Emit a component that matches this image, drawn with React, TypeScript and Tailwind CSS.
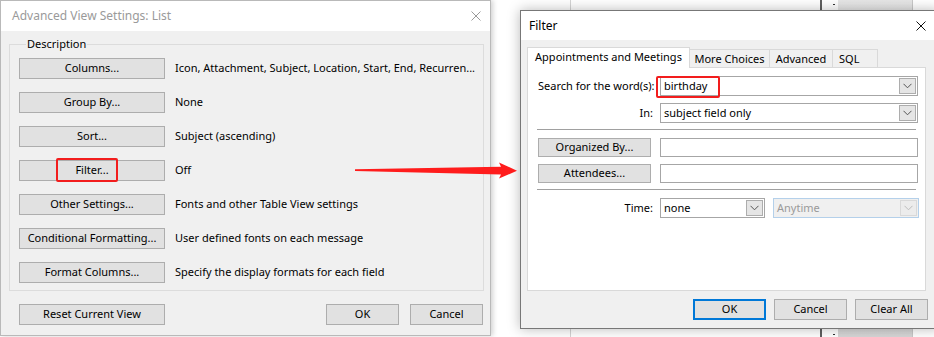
import React from "react";

const FONT = { fontFamily: '"Noto Sans", "Open Sans", sans-serif' };

function Chevron({ color = "#444" }: { color?: string }) {
  return (
    <svg width="9" height="6" viewBox="0 0 9 6">
      <polyline points="0.5,0.8 4.5,4.8 8.5,0.8" fill="none" stroke={color} strokeWidth="1" />
    </svg>
  );
}

function XIcon({ color, size = 10 }: { color: string; size?: number }) {
  return (
    <svg width={size} height={size} viewBox="0 0 10 10">
      <line x1="0.5" y1="0.5" x2="9.5" y2="9.5" stroke={color} strokeWidth="1" />
      <line x1="9.5" y1="0.5" x2="0.5" y2="9.5" stroke={color} strokeWidth="1" />
    </svg>
  );
}

function Btn({ children, className = "" }: { children: React.ReactNode; className?: string }) {
  return (
    <div
      className={
        "border border-[#adadad] bg-[#e1e1e1] text-[11px] text-black flex items-center justify-center shrink-0 whitespace-nowrap " +
        className
      }
    >
      {children}
    </div>
  );
}

function Combo({
  value,
  className = "",
  disabled = false,
}: {
  value: string;
  className?: string;
  disabled?: boolean;
}) {
  return (
    <div
      className={
        "h-[20px] border flex items-stretch shrink-0 " +
        (disabled ? "border-[#b4d0ea] bg-[#f0f0f0] " : "border-[#a6a6a6] bg-white ") +
        className
      }
    >
      <div
        className={
          "flex-1 flex items-center pl-[3px] text-[11px] whitespace-nowrap " +
          (disabled ? "text-[#9a9a9a]" : "text-black")
        }
      >
        {value}
      </div>
      <div
        className={
          "w-[17px] my-[1px] mr-[1px] border flex items-center justify-center " +
          (disabled ? "border-[#d9d9d9] bg-[#ececec]" : "border-[#adadad] bg-[#e5e5e5]")
        }
      >
        <Chevron color={disabled ? "#bdbdbd" : "#555"} />
      </div>
    </div>
  );
}

const rows: [string, string][] = [
  ["Columns...", "Icon, Attachment, Subject, Location, Start, End, Recurren..."],
  ["Group By...", "None"],
  ["Sort...", "Subject (ascending)"],
  ["Filter...", "Off"],
  ["Other Settings...", "Fonts and other Table View settings"],
  ["Conditional Formatting...", "User defined fonts on each message"],
  ["Format Columns...", "Specify the display formats for each field"],
];

export default function App() {
  return (
    <div className="relative w-[934px] h-[337px] overflow-hidden bg-white" style={FONT}>
      {/* background application behind the dialogs */}
      <div className="absolute left-[570px] top-0 w-px h-full bg-[#d4d4d4]" />
      <div className="absolute left-[820px] top-0 w-[2px] h-full bg-[#5f5f5f]" />
      <div className="absolute left-[838px] top-0 w-[74px] h-full bg-gradient-to-b from-[#e6e6e6] to-[#d6d6d6]" />
      <div className="absolute left-[912px] top-0 w-px h-full bg-[#c8c8c8]" />
      <div className="absolute left-[833px] top-[4px] w-[2px] h-px bg-[#333]" />
      <div className="absolute left-[833px] top-[334px] w-[2px] h-px bg-[#333]" />

      <div className="relative flex items-start">
        {/* Left dialog */}
        <div className="w-[491px] h-[336px] border border-[#b9b9b9] bg-[#f0f0f0] flex flex-col shrink-0 shadow-[2px_0_5px_rgba(0,0,0,0.18)]">
          <div className="h-[30px] bg-white flex items-center justify-between pl-[11px] pr-[9px]">
            <span className="text-[12px] text-[#9a9a9a] pb-[1px]">Advanced View Settings: List</span>
            <XIcon color="#9a9a9a" />
          </div>
          <div className="pl-[8px] pt-[13px]">
            <div className="w-[475px] h-[247px] border border-[#dcdcdc] flex flex-col pl-[9px]">
              <span className="-mt-[9px] ml-[7px] w-fit px-[1px] h-[16px] leading-[16px] text-[11px] text-black bg-[#f0f0f0]">
                Description
              </span>
              <div className="mt-[6px] flex flex-col gap-[13px]">
                {rows.map(([b, d]) => (
                  <div key={b} className="flex items-center gap-[10px]">
                    <div className="relative">
                      <Btn className="w-[146px] h-[21px]">{b}</Btn>
                      {b === "Filter..." && (
                        <div className="absolute left-[37px] -top-[2px] w-[62px] h-[24px] border-2 border-[#f21d1d] rounded-[2px]" />
                      )}
                    </div>
                    <span className="text-[11px] text-black whitespace-nowrap">{d}</span>
                  </div>
                ))}
              </div>
            </div>
            <div className="mt-[13px] flex pl-[10px] w-[474px]">
              <Btn className="w-[146px] h-[21px]">Reset Current View</Btn>
              <div className="flex-1" />
              <Btn className="w-[73px] h-[21px]">OK</Btn>
              <Btn className="w-[73px] h-[21px] ml-[11px]">Cancel</Btn>
            </div>
          </div>
        </div>

        {/* Right dialog */}
        <div className="ml-[29px] mt-[10px] w-[420px] h-[319px] border border-[#777777] bg-[#f0f0f0] flex flex-col shrink-0 shadow-[0_0_12px_rgba(0,0,0,0.28)]">
          <div className="h-[29px] bg-white flex items-center justify-between pl-[8px] w-[414px] pr-[9px]">
            <span className="text-[12px] text-black">Filter</span>
            <XIcon color="#111" />
          </div>
          <div className="w-[407px] pl-[6px] pt-[7px] flex flex-col">
            {/* tabs */}
            <div className="flex items-end h-[21px] relative z-10">
              <div className="w-[163px] h-[21px] bg-white border-t border-l border-r border-[#d9d9d9] flex items-center justify-center text-[11px] text-black pb-[2px]">
                Appointments and Meetings
              </div>
              <div className="w-[80px] h-[19px] border-t border-r border-[#d9d9d9] flex items-center justify-center text-[11px] text-black">
                More Choices
              </div>
              <div className="w-[63px] h-[19px] border-t border-r border-[#d9d9d9] flex items-center justify-center text-[11px] text-black">
                Advanced
              </div>
              <div className="w-[45px] h-[19px] border-t border-r border-[#d9d9d9] flex items-center pl-[6px] text-[11px] text-black">
                SQL
              </div>
            </div>
            {/* panel */}
            <div className="-mt-px w-[399px] h-[224px] bg-white border border-[#d9d9d9] pl-[10px] pt-[8px] flex flex-col">
              <div className="grid grid-cols-[115px_258px] gap-x-[7px] gap-y-[7px] items-center">
                <span className="text-[11px] text-black text-right whitespace-nowrap">Search for the word(s):</span>
                <div className="relative">
                  <Combo value="birthday" className="w-[258px]" />
                  <div className="absolute -left-[4px] top-0 w-[64px] h-[22px] border-2 border-[#f21d1d] rounded-[2px]" />
                </div>
                <span className="text-[11px] text-black text-right">In:</span>
                <Combo value="subject field only" className="w-[258px]" />
              </div>
              <div className="mt-[6px] w-[379px] h-px bg-[#a0a0a0] -ml-px" />
              <div className="mt-[8px] flex flex-col gap-[7px]">
                <div className="flex items-center gap-[9px]">
                  <Btn className="w-[113px] h-[19px]">Organized By...</Btn>
                  <div className="w-[258px] h-[19px] border border-[#a6a6a6] bg-white" />
                </div>
                <div className="flex items-center gap-[9px]">
                  <Btn className="w-[113px] h-[19px]">Attendees...</Btn>
                  <div className="w-[258px] h-[19px] border border-[#a6a6a6] bg-white" />
                </div>
              </div>
              <div className="mt-[6px] w-[379px] h-px bg-[#a0a0a0] -ml-px" />
              <div className="mt-[8px] flex items-center">
                <span className="w-[115px] text-right text-[11px] text-black">Time:</span>
                <Combo value="none" className="w-[105px] ml-[7px]" />
                <Combo value="Anytime" className="w-[146px] ml-[8px]" disabled />
              </div>
            </div>
            <div className="mt-[8px] flex justify-end gap-[8px]">
              <div className="w-[73px] h-[21px] border-2 border-[#0078d7] bg-[#e1e1e1] text-[11px] text-black flex items-center justify-center">
                OK
              </div>
              <Btn className="w-[73px] h-[21px]">Cancel</Btn>
              <Btn className="w-[73px] h-[21px]">Clear All</Btn>
            </div>
          </div>
        </div>
      </div>

      {/* red arrow overlay */}
      <svg className="absolute left-0 top-0 pointer-events-none" width="934" height="337">
        <polygon
          points="355,169.3 501,166.8 499,162.5 517,170.7 499,178.6 501,174.4 355,170.9"
          fill="#ff1c1c"
        />
      </svg>
    </div>
  );
}
